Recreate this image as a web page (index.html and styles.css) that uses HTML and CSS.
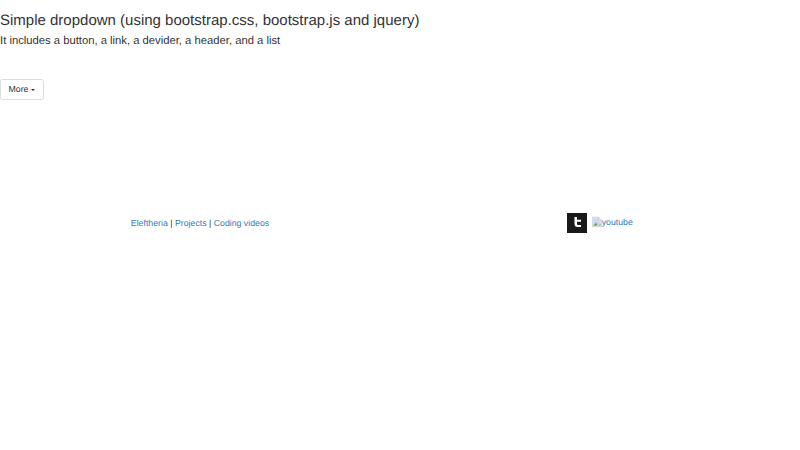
FILE: index.html
```html
<!DOCTYPE html>
<html lang="en">
<head>
    <meta charset="UTF-8">
    <title>Simple dropdown</title>
    <link rel="stylesheet" href="styles.css">
</head>
<body>
    <div class="intro">
        <h3>Simple dropdown (using bootstrap.css, bootstrap.js and jquery)</h3>
        <p>It includes a button, a link, a devider, a header, and a list</p>
    </div>

    <div class="dropdown">
        <button class="btn" type="button">More <span class="caret"></span></button>
    </div>

    <div class="footer">
        <div class="links">
            <a href="#">Eleftheria</a> | <a href="#">Projects</a> | <a href="#">Coding videos</a>
        </div>
        <div class="socials">
            <a href="#" class="social">
                <svg width="20" height="20" viewBox="0 0 20 20"><rect width="20" height="20" fill="#1a1a1a"/><path d="M7.500 4h2.500v2.800h4v1.900h-4v2.100c0 .8.400 1.300 1.200 1.300H14V14h-3.300C8.600 14 7.500 12.900 7.500 11z" fill="#fff"/></svg>
            </a>
            <a href="#" class="social broken">
                <svg class="broken-img" viewBox="0 0 16 16"><path d="M.5.5h10l5 5v10H.5z" fill="#fff" stroke="#b5b5b5"/><path d="M10.500.5v5h5" fill="#e8e8e8" stroke="#b5b5b5"/><path d="M2 2h8v5h4v2L8 14H2z" fill="#c3d6f2"/><path d="M2 14l4-5 3 3-2 2z" fill="#6fa85c"/><path d="M9 14l5-4v4z" fill="#8dbb7c"/></svg>youtube
            </a>
        </div>
    </div>
</body>
</html>
```

FILE: styles.css
```css
body {
    margin: 0;
    font-family: "Liberation Sans", Arial, sans-serif;
    font-size: 8.75px;
    line-height: 1.42857;
    color: #333;
    background: #fff;
    text-rendering: geometricPrecision;
}
a {
    color: #337ab7;
    text-decoration: none;
}
.intro {
    padding-top: 10px;
}
.intro h3 {
    margin: 0;
    font-size: 15px;
    font-weight: 500;
    line-height: 21px;
}
.intro p {
    margin: 0;
    font-size: 11.25px;
    line-height: 20px;
}
.dropdown {
    margin-top: 28px;
}
.btn {
    display: block;
    height: 21px;
    padding: 0 7.5px 1px;
    font-family: inherit;
    font-size: 8.75px;
    color: #333;
    background: #fff;
    border: 1px solid #ddd;
    border-radius: 2.500px;
    text-rendering: geometricPrecision;
}
.caret {
    display: inline-block;
    margin-left: 0.5px;
    vertical-align: middle;
    border-top: 2.500px solid #333;
    border-left: 2.500px solid transparent;
    border-right: 2.500px solid transparent;
}
.footer {
    display: flex;
    margin-top: 113px;
}
.links {
    width: 50%;
    text-align: center;
    line-height: 21px;
}
.socials {
    width: 50%;
    display: flex;
    justify-content: center;
    align-items: center;
    gap: 4.500px;
    height: 20px;
}
.social {
    display: flex;
    align-items: flex-start;
}
.broken {
    height: 20px;
    line-height: 18px;
}
.broken-img {
    width: 10px;
    height: 12px;
    margin-top: 3px;
}
```
